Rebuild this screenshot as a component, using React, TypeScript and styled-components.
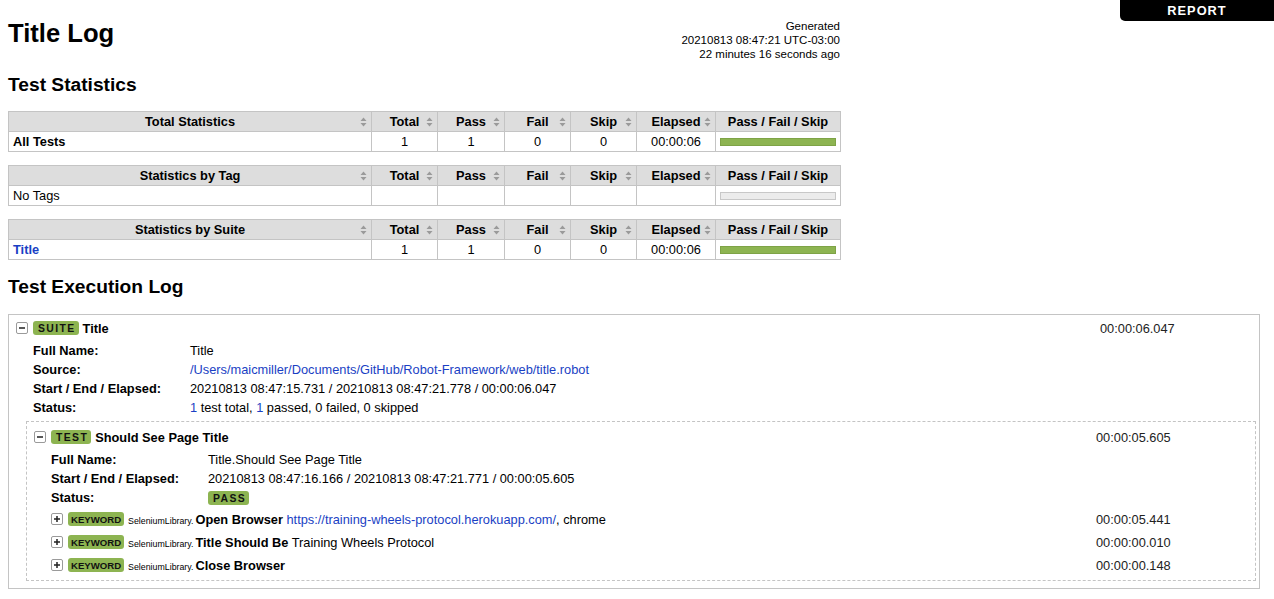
import React from "react";
import styled, { createGlobalStyle } from "styled-components";

const GREEN = "#8db451";

const GlobalStyle = createGlobalStyle`
  html, body {
    margin: 0;
    padding: 0;
    background: #fff;
  }
  body {
    font-family: "Liberation Sans", Helvetica, Arial, sans-serif;
    font-size: 12.8px;
    color: #000;
  }
  a {
    color: #1a3fc4;
    text-decoration: none;
  }
`;

const Page = styled.div`
  position: relative;
  padding: 0 8px;
`;

const ReportLink = styled.a`
  position: absolute;
  top: 0;
  right: 0;
  width: 154px;
  height: 21px;
  display: flex;
  align-items: center;
  justify-content: center;
  background: #000;
  color: #fff;
  border-bottom-left-radius: 5px;
  font-size: 12.8px;
  font-weight: bold;
  letter-spacing: 1px;
`;

const Header = styled.header`
  width: 832px;
  display: flex;
  justify-content: space-between;
  align-items: flex-start;
`;

const Title = styled.h1`
  margin: 18px 0 0;
  font-size: 25.6px;
  line-height: 30px;
  font-weight: bold;
`;

const Generated = styled.div`
  margin-top: 19px;
  text-align: right;
  font-size: 11.5px;
  line-height: 14px;
`;

const SectionTitle = styled.h2<{ $top: number; $bottom: number }>`
  margin: ${(p) => p.$top}px 0 ${(p) => p.$bottom}px;
  font-size: 19.2px;
  line-height: 22px;
  font-weight: bold;
`;

const StatTable = styled.table`
  width: 832px;
  border-collapse: collapse;
  table-layout: fixed;
  margin-bottom: 13px;
`;

const Th = styled.th`
  position: relative;
  height: 19px;
  padding: 0;
  background: #ddd;
  border: 1px solid #c4c4c4;
  font-weight: bold;
  text-align: center;
`;

const SortMark = styled.span`
  position: absolute;
  right: 4px;
  top: 5px;
  display: flex;
`;

const Td = styled.td<{ $left?: boolean }>`
  height: 19px;
  padding: 0 ${(p) => (p.$left ? "4px" : "0")};
  border: 1px solid #c4c4c4;
  text-align: ${(p) => (p.$left ? "left" : "center")};
  white-space: nowrap;
`;

const StatName = styled.span<{ $bold?: boolean }>`
  font-weight: ${(p) => (p.$bold ? "bold" : "normal")};
`;

const Bar = styled.div<{ $empty?: boolean }>`
  height: 6px;
  margin: 0 4px;
  border: 1px solid ${(p) => (p.$empty ? "#c8c8c8" : "#7ea346")};
  background: ${(p) => (p.$empty ? "#ececec" : GREEN)};
`;

const SuiteBox = styled.div`
  margin-right: 6px;
  border: 1px solid #c4c4c4;
  padding: 3px 0 7px;
`;

const TestBox = styled.div`
  margin: 4px 3px 0 17px;
  border: 1px dashed #c4c4c4;
  padding: 5px 0 5px;
`;

const ElementHeader = styled.div`
  display: flex;
  align-items: center;
  height: 20px;
  padding-left: 7px;
`;

const HeaderMain = styled.div`
  flex: 1;
  display: flex;
  align-items: center;
  min-width: 0;
  white-space: nowrap;
`;

const Elapsed = styled.div`
  flex: none;
  width: 159px;
  color: #222;
`;

const Toggle = styled.span`
  flex: none;
  width: 10px;
  height: 10px;
  border: 1px solid #9a9a9a;
  border-radius: 2px;
  background: #fff;
  display: flex;
  align-items: center;
  justify-content: center;
  margin-right: 5px;
`;

const Label = styled.span<{ $keyword?: boolean }>`
  flex: none;
  display: inline-flex;
  align-items: center;
  height: 14px;
  padding: ${(p) => (p.$keyword ? "0 3px" : "0 3px 0 5px")};
  border-radius: 3px;
  background: ${GREEN};
  color: #111;
  font-size: ${(p) => (p.$keyword ? "9.6px" : "10.4px")};
  font-weight: bold;
  letter-spacing: ${(p) => (p.$keyword ? "0" : "1.4px")};
  margin-right: 4px;
`;

const Name = styled.span`
  font-weight: bold;
`;

const Metadata = styled.div`
  display: grid;
  grid-template-columns: 157px 1fr;
  grid-auto-rows: 19px;
  align-items: center;
  margin: 3px 0 0 24px;
`;

const MetaKey = styled.div`
  font-weight: bold;
`;

const MetaValue = styled.div`
  white-space: nowrap;
`;

const Keywords = styled.div`
  margin: 2px 0 0 17px;
  display: flex;
  flex-direction: column;
  gap: 3px;
`;

const KwText = styled.span`
  white-space: nowrap;
`;

const Lib = styled.span`
  font-size: 8.8px;
  margin-right: 2px;
`;

const SortIcon = () => (
  <svg width="7" height="10" viewBox="0 0 7 10">
    <path d="M3.5 0.5 L6.5 4 H0.5 Z M0.5 6 H6.5 L3.5 9.5 Z" fill="#9a9a9a" />
  </svg>
);

const ToggleIcon = ({ open }: { open: boolean }) => (
  <svg width="6" height="6" viewBox="0 0 6 6">
    <rect x="0" y="2.25" width="6" height="1.5" fill="#222" />
    {!open && <rect x="2.25" y="0" width="1.5" height="6" fill="#222" />}
  </svg>
);

const colWidths = [363, 66, 67, 66, 66, 79, 125];

interface StatRow {
  name: string;
  bold?: boolean;
  link?: boolean;
  total?: string;
  pass?: string;
  fail?: string;
  skip?: string;
  elapsed?: string;
  empty?: boolean;
}

const statTables: { title: string; row: StatRow }[] = [
  {
    title: "Total Statistics",
    row: { name: "All Tests", bold: true, total: "1", pass: "1", fail: "0", skip: "0", elapsed: "00:00:06" },
  },
  { title: "Statistics by Tag", row: { name: "No Tags", empty: true } },
  {
    title: "Statistics by Suite",
    row: { name: "Title", bold: true, link: true, total: "1", pass: "1", fail: "0", skip: "0", elapsed: "00:00:06" },
  },
];

const StatsTable = ({ title, row }: { title: string; row: StatRow }) => (
  <StatTable>
    <colgroup>
      {colWidths.map((w, i) => (
        <col key={i} style={{ width: w }} />
      ))}
    </colgroup>
    <thead>
      <tr>
        <Th>
          {title}
          <SortMark>
            <SortIcon />
          </SortMark>
        </Th>
        {["Total", "Pass", "Fail", "Skip", "Elapsed"].map((h) => (
          <Th key={h}>
            {h}
            <SortMark>
              <SortIcon />
            </SortMark>
          </Th>
        ))}
        <Th>Pass / Fail / Skip</Th>
      </tr>
    </thead>
    <tbody>
      <tr>
        <Td $left>
          {row.link ? (
            <a href="#">
              <StatName $bold={row.bold}>{row.name}</StatName>
            </a>
          ) : (
            <StatName $bold={row.bold}>{row.name}</StatName>
          )}
        </Td>
        <Td>{row.total}</Td>
        <Td>{row.pass}</Td>
        <Td>{row.fail}</Td>
        <Td>{row.skip}</Td>
        <Td>{row.elapsed}</Td>
        <Td>
          <Bar $empty={row.empty} />
        </Td>
      </tr>
    </tbody>
  </StatTable>
);

const keywords = [
  {
    name: "Open Browser",
    args: (
      <>
        <a href="#">https://training-wheels-protocol.herokuapp.com/</a>, chrome
      </>
    ),
    elapsed: "00:00:05.441",
  },
  { name: "Title Should Be", args: <>Training Wheels Protocol</>, elapsed: "00:00:00.010" },
  { name: "Close Browser", args: null, elapsed: "00:00:00.148" },
];

const App: React.FC = () => {
  return (
    <>
      <GlobalStyle />
      <Page>
        <ReportLink href="#">REPORT</ReportLink>
        <Header>
          <Title>Title Log</Title>
          <Generated>
            Generated
            <br />
            20210813 08:47:21 UTC-03:00
            <br />
            22 minutes 16 seconds ago
          </Generated>
        </Header>

        <SectionTitle $top={13} $bottom={15}>
          Test Statistics
        </SectionTitle>
        {statTables.map((t) => (
          <StatsTable key={t.title} title={t.title} row={t.row} />
        ))}

        <SectionTitle $top={16} $bottom={16}>
          Test Execution Log
        </SectionTitle>
        <SuiteBox>
          <ElementHeader>
            <HeaderMain>
              <Toggle>
                <ToggleIcon open />
              </Toggle>
              <Label>SUITE</Label>
              <Name>Title</Name>
            </HeaderMain>
            <Elapsed>00:00:06.047</Elapsed>
          </ElementHeader>
          <Metadata>
            <MetaKey>Full Name:</MetaKey>
            <MetaValue>Title</MetaValue>
            <MetaKey>Source:</MetaKey>
            <MetaValue>
              <a href="#">/Users/maicmiller/Documents/GitHub/Robot-Framework/web/title.robot</a>
            </MetaValue>
            <MetaKey>Start / End / Elapsed:</MetaKey>
            <MetaValue>20210813 08:47:15.731 / 20210813 08:47:21.778 / 00:00:06.047</MetaValue>
            <MetaKey>Status:</MetaKey>
            <MetaValue>
              <a href="#">1</a> test total, <a href="#">1</a> passed, 0 failed, 0 skipped
            </MetaValue>
          </Metadata>

          <TestBox>
            <ElementHeader>
              <HeaderMain>
                <Toggle>
                  <ToggleIcon open />
                </Toggle>
                <Label>TEST</Label>
                <Name>Should See Page Title</Name>
              </HeaderMain>
              <Elapsed>00:00:05.605</Elapsed>
            </ElementHeader>
            <Metadata>
              <MetaKey>Full Name:</MetaKey>
              <MetaValue>Title.Should See Page Title</MetaValue>
              <MetaKey>Start / End / Elapsed:</MetaKey>
              <MetaValue>20210813 08:47:16.166 / 20210813 08:47:21.771 / 00:00:05.605</MetaValue>
              <MetaKey>Status:</MetaKey>
              <MetaValue>
                <Label>PASS</Label>
              </MetaValue>
            </Metadata>
            <Keywords>
              {keywords.map((k) => (
                <ElementHeader key={k.name}>
                  <HeaderMain>
                    <Toggle>
                      <ToggleIcon open={false} />
                    </Toggle>
                    <Label $keyword>KEYWORD</Label>
                    <KwText>
                      <Lib>SeleniumLibrary.</Lib>
                      <Name>{k.name}</Name>
                      {k.args && <> {k.args}</>}
                    </KwText>
                  </HeaderMain>
                  <Elapsed>{k.elapsed}</Elapsed>
                </ElementHeader>
              ))}
            </Keywords>
          </TestBox>
        </SuiteBox>
      </Page>
    </>
  );
};

export default App;
